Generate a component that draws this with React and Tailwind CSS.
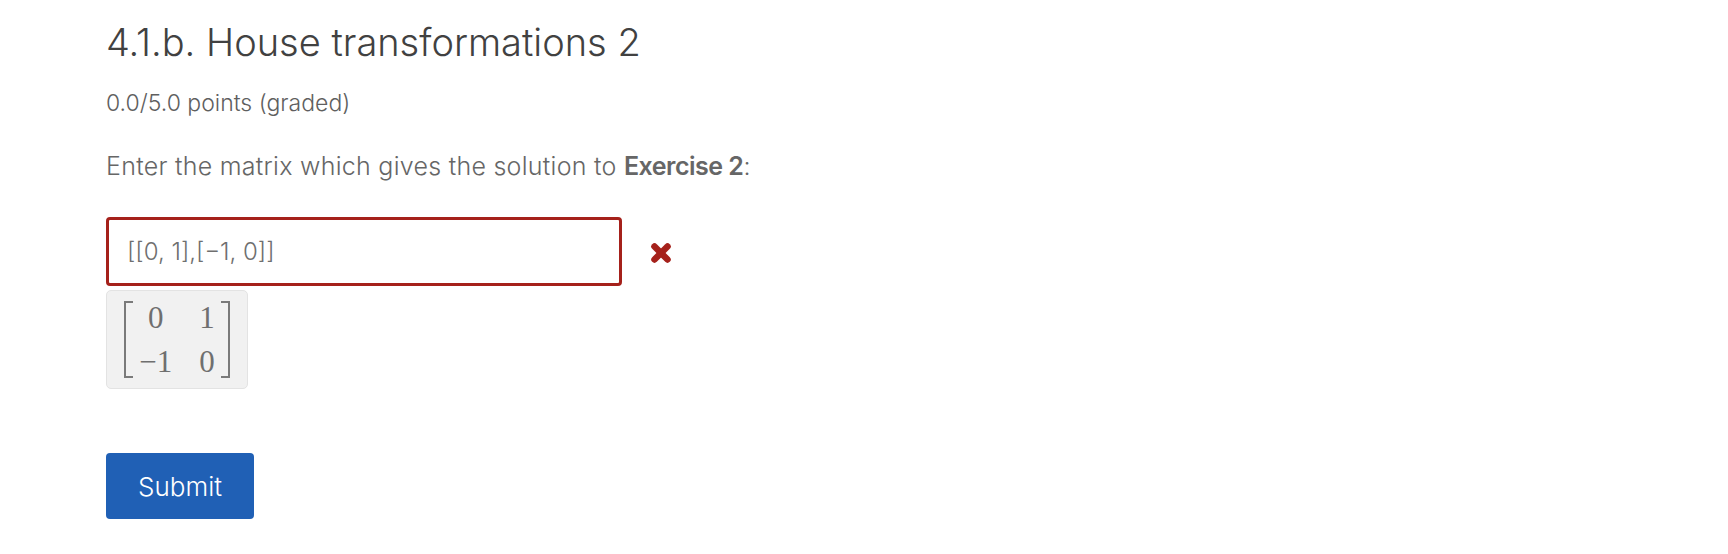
const Matrix = () => {
  return (
    <div className="flex items-stretch font-['Liberation_Serif',serif] text-[31px] leading-[44px] text-[#6f6f6f]">
      <div className="my-[6px] w-[9px] border-y-2 border-l-2 border-[#7a7a7a]" />
      <div className="grid grid-cols-[auto_auto] gap-x-[27px] px-[6px] pt-[1px] text-center">
        <span>0</span>
        <span>1</span>
        <span>−1</span>
        <span>0</span>
      </div>
      <div className="my-[6px] w-[9px] border-y-2 border-r-2 border-[#7a7a7a]" />
    </div>
  );
};

const CrossIcon = () => {
  return (
    <svg viewBox="0 0 22 22" className="ml-[28px] mt-[3px] h-[22px] w-[22px] text-[#a5211b]" fill="none" stroke="currentColor" strokeWidth="6.5" strokeLinecap="round">
      <path d="M4.5 4.5 17.5 17.5" />
      <path d="M17.5 4.5 4.5 17.5" />
    </svg>
  );
};

const App = () => {
  return (
    <div className="h-[554px] w-full overflow-hidden bg-white pl-[106px] font-['Inter',sans-serif] text-[#5f5f5f]">
      <h2 className="pt-[18px] text-[38px] font-light leading-[48px] text-[#414141]">4.1.b. House transformations 2</h2>
      <div className="mt-[22px] text-[23px] font-light leading-[30px]">0.0/5.0 points (graded)</div>
      <p className="mt-[32px] text-[25px] font-light leading-[32px] tracking-[0.27px] text-[#666666]">
        Enter the matrix which gives the solution to <b className="font-semibold tracking-[-0.5px]">Exercise 2</b>:
      </p>
      <div className="mt-[35px] flex items-center">
        <div className="flex h-[69px] w-[516px] items-center rounded-[4px] border-[3px] border-[#a5211b] pl-[18px] text-[24px] font-light text-[#6f6f6f]">
          [[0, 1],[−1, 0]]
        </div>
        <CrossIcon />
      </div>
      <div className="mt-[4px] inline-flex h-[99px] w-[142px] items-center justify-center rounded-[5px] border border-[#e3e3e3] bg-[#f1f1f1]">
        <Matrix />
      </div>
      <div className="mt-[64px]">
        <button className="h-[66px] w-[148px] rounded-[4px] bg-[#2060b5] text-[26px] font-light text-white">Submit</button>
      </div>
    </div>
  );
};

export default App;
